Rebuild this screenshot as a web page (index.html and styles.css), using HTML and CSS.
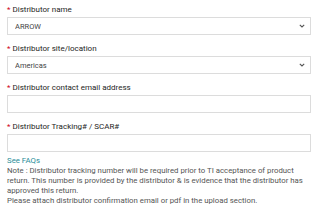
FILE: index.html
```html
<!DOCTYPE html>
<html lang="en">
<head>
    <meta charset="UTF-8">
    <title>Distributor details</title>
    <link rel="stylesheet" href="styles.css">
</head>
<body>
    <form class="form">
        <div class="field">
            <label class="label"><span class="req">*</span> Distributor name</label>
            <div class="select-wrap">
                <select class="control">
                    <option>ARROW</option>
                </select>
                <svg class="chevron" width="6" height="4" viewBox="0 0 6 4"><path d="M0.8 0.8 L3 3 L5.2 0.8" fill="none" stroke="#555" stroke-width="1.1"/></svg>
            </div>
        </div>
        <div class="field">
            <label class="label"><span class="req">*</span> Distributor site/location</label>
            <div class="select-wrap">
                <select class="control">
                    <option>Americas</option>
                </select>
                <svg class="chevron" width="6" height="4" viewBox="0 0 6 4"><path d="M0.8 0.8 L3 3 L5.2 0.8" fill="none" stroke="#555" stroke-width="1.1"/></svg>
            </div>
        </div>
        <div class="field">
            <label class="label"><span class="req">*</span> Distributor contact email address</label>
            <input type="text" class="control">
        </div>
        <div class="field">
            <label class="label"><span class="req">*</span> Distributor Tracking# / SCAR#</label>
            <input type="text" class="control">
        </div>

        <div class="notes">
            <a class="faq" href="#">See FAQs</a>
            <p>Note : Distributor tracking number will be required prior to TI acceptance of product return. This number is provided by the distributor &amp; is evidence that the distributor has approved this return.</p>
            <p>Please attach distributor confirmation email or pdf in the upload section.</p>
        </div>
    </form>
</body>
</html>
```

FILE: styles.css
```css
/* Base styling */
body {
    margin: 0;
    background: #fff;
    color: #333;
    font-family: Roboto, "Liberation Sans", Arial, sans-serif;
}
.form {
    padding: 5px 9px 0 7px;
}
.field {
    margin-bottom: 9px;
}
.label {
    display: block;
    font-size: 8px;
    font-weight: 400;
    line-height: 10px;
    margin-bottom: 2px;
    color: #1e1e1e;
}
.req {
    color: #d0021b;
}
.select-wrap {
    position: relative;
}
.control {
    display: block;
    box-sizing: border-box;
    width: 100%;
    height: 18px;
    margin: 0;
    padding: 0 7px;
    border: 1px solid #dcdcdc;
    border-radius: 0;
    background: #fff;
    font-family: inherit;
    font-size: 7.5px;
    color: #444;
    appearance: none;
    -webkit-appearance: none;
    outline: none;
}
.chevron {
    position: absolute;
    right: 6px;
    top: 7px;
}
.notes {
    margin-top: -5px;
    font-size: 7.8px;
    line-height: 10px;
    color: #555;
}
.faq {
    color: #1f8c98;
    text-decoration: none;
}
.notes p {
    margin: 0;
}
```
